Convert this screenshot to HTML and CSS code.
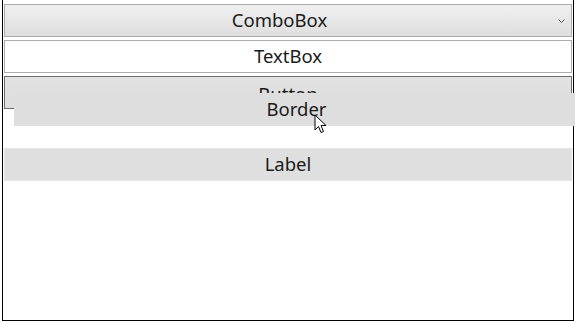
FILE: index.html
```html
<!DOCTYPE html>
<html lang="en">
<head>
    <meta charset="UTF-8">
    <title>Designer</title>
    <link rel="stylesheet" href="styles.css">
</head>
<body>
    <div class="frame">
        <div class="item combo">
            <span>ComboBox</span>
            <svg class="chevron" width="7" height="5" viewBox="0 0 7 5"><path d="M0.5 0.5 L3.5 3.5 L6.5 0.5" fill="none" stroke="#555" stroke-width="1"/></svg>
        </div>
        <div class="item textbox">TextBox</div>
        <div class="item button"><span>Button</span></div>
        <div class="item slot"></div>
        <div class="item label">Label</div>
    </div>

    <!-- element being dragged -->
    <div class="drag">Border</div>
    <svg class="cursor" width="13" height="20" viewBox="0 0 13 20">
        <path d="M1 1 L1 16 L4.5 12.5 L7 18.5 L9.5 17.5 L7 11.5 L12 11.5 Z" fill="#fff" stroke="#000" stroke-width="1" stroke-linejoin="round"/>
    </svg>
</body>
</html>
```

FILE: styles.css
```css
body {
    margin: 0;
    background: #fff;
    font-family: "Noto Sans", "Noto Sans CJK SC", sans-serif;
    font-size: 18.5px;
    color: #1a1a1a;
}

.frame {
    margin-left: 2px;
    width: 568px;
    height: 316px;
    padding: 4px 1px 0;
    border: 1px solid #000;
    border-top: none;
    display: flex;
    flex-direction: column;
    gap: 3px;
}

.item {
    height: 33px;
    box-sizing: border-box;
    display: flex;
    align-items: center;
    justify-content: center;
    line-height: 1;
}

.combo {
    position: relative;
    padding-right: 17px;
    border: 1px solid #acacac;
    background: linear-gradient(#f0f0f0, #e6e6e6 55%, #dedede);
}

.chevron {
    position: absolute;
    right: 6px;
    top: 14px;
}

.textbox {
    border: 1px solid #abadb3;
    background: #fff;
}

.button {
    border: 1px solid #707070;
    background: linear-gradient(#e2e2e2, #dddddd);
    align-items: flex-start;
    overflow: hidden;
}

.button span {
    padding-top: 8px;
}

.label {
    background: #dfdfdf;
    border: 1px solid #e6e6e6;
}

.drag {
    position: absolute;
    left: 14px;
    top: 93px;
    width: 561px;
    height: 33px;
    padding-left: 4px;
    box-sizing: border-box;
    background: #dedede;
    display: flex;
    align-items: center;
    justify-content: center;
    line-height: 1;
}

.cursor {
    position: absolute;
    left: 314px;
    top: 114px;
}
```
